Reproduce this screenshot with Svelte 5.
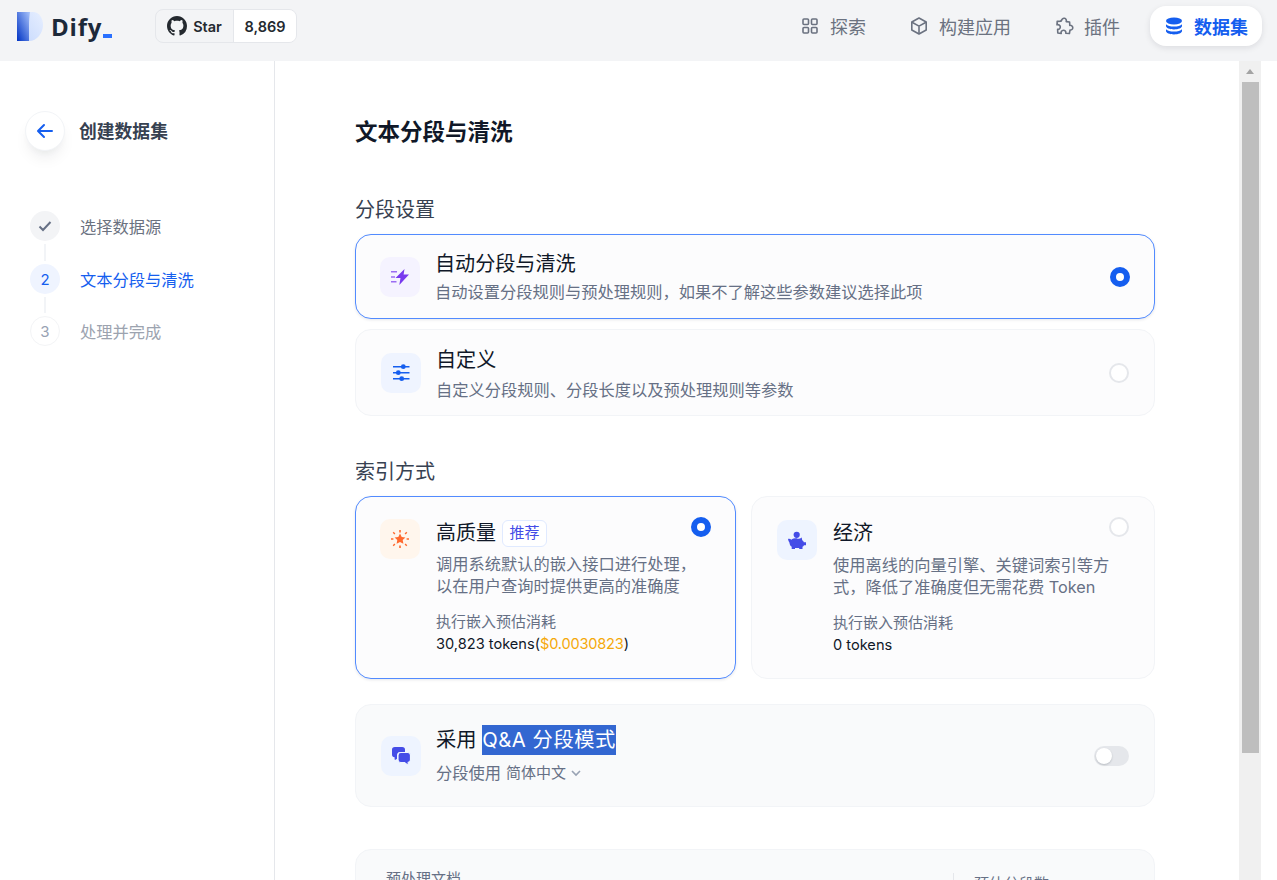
<script>
  const steps = [
    { n: "", label: "选择数据源", state: "done" },
    { n: "2", label: "文本分段与清洗", state: "active" },
    { n: "3", label: "处理并完成", state: "todo" }
  ];
</script>

<div class="page">
  <header class="topbar">
    <div class="brand">
      <svg class="logo" width="26" height="29" viewBox="0 0 26 29">
        <defs>
          <linearGradient id="stem" x1="0" y1="1" x2="1" y2="0">
            <stop offset="0" stop-color="#0033c4" />
            <stop offset="1" stop-color="#a9c4fb" />
          </linearGradient>
          <linearGradient id="bowl" x1="0" y1="1" x2="1" y2="0.2">
            <stop offset="0" stop-color="#c3d6fc" />
            <stop offset="1" stop-color="#e4edff" />
          </linearGradient>
        </defs>
        <path d="M0 0H16C22 0 26 6 26 13C26 21 20 29 12 29H0Z" fill="url(#bowl)" />
        <path d="M0 0H13C12.500 4 12 8 12 13V29H0Z" fill="url(#stem)" />
      </svg>
      <span class="wordmark">Dify</span><span class="dash"></span>
    </div>
    <div class="stars">
      <span class="stars-label">
        <svg width="20" height="20" viewBox="0 0 16 16" fill="#24292f"><path d="M8 0C3.58 0 0 3.58 0 8c0 3.54 2.29 6.53 5.47 7.59.4.07.55-.17.55-.38 0-.19-.01-.82-.01-1.49-2.01.37-2.53-.49-2.69-.94-.09-.23-.48-.94-.82-1.13-.28-.15-.68-.52-.01-.53.63-.01 1.08.58 1.23.82.72 1.21 1.87.87 2.33.66.07-.52.28-.87.51-1.07-1.78-.2-3.64-.89-3.64-3.95 0-.87.31-1.59.82-2.15-.08-.2-.36-1.02.08-2.12 0 0 .67-.21 2.2.82.64-.18 1.32-.27 2-.27.68 0 1.36.09 2 .27 1.53-1.04 2.2-.82 2.2-.82.44 1.1.16 1.92.08 2.12.51.56.82 1.27.82 2.15 0 3.07-1.87 3.75-3.65 3.95.29.25.54.73.54 1.48 0 1.07-.01 1.93-.01 2.2 0 .21.15.46.55.38A8.013 8.013 0 0016 8c0-4.42-3.58-8-8-8z" /></svg>
        Star
      </span>
      <span class="stars-count">8,869</span>
    </div>
    <nav class="nav">
      <span class="nav-item">
        <svg width="20" height="20" viewBox="0 0 20 20" fill="none" stroke="#6b7280" stroke-width="1.6"><rect x="3" y="3" width="5.5" height="5.5" rx="1" /><rect x="11.5" y="3" width="5.5" height="5.5" rx="1" /><rect x="3" y="11.5" width="5.5" height="5.5" rx="1" /><rect x="11.5" y="11.5" width="5.5" height="5.5" rx="1" /></svg>
        探索
      </span>
      <span class="nav-item">
        <svg width="20" height="20" viewBox="0 0 20 20" fill="none" stroke="#6b7280" stroke-width="1.6" stroke-linejoin="round"><path d="M10 2l7.2 4v8L10 18l-7.2-4V6L10 2Z" /><path d="M3 6.2l7 3.9 7-3.9M10 10.1V18" /></svg>
        构建应用
      </span>
      <span class="nav-item plugin">
        <svg width="20" height="20" viewBox="0 0 20 20" fill="none" stroke="#6b7280" stroke-width="1.6" stroke-linejoin="round"><path d="M7.600 4.600a2.400 2.400 0 1 1 4.600 1L15.600 6l.2 3.400a2.400 2.400 0 1 1 .2 4.700l-.6 3.400-3.600-.3a2.400 2.400 0 1 0-4.600.2l-3.400-.4-.2-3.600a2.400 2.400 0 1 0-.6-4.600l.2-3.400 4-.3-.2-.5Z" /></svg>
        插件
      </span>
      <span class="nav-item current">
        <svg width="20" height="20" viewBox="0 0 20 20" fill="#155eef"><ellipse cx="10" cy="5" rx="8" ry="3.400" /><path d="M2 8.200c1.300 1.500 4.400 2.300 8 2.300s6.700-.8 8-2.300V10c0 1.900-3.600 3.400-8 3.400S2 11.900 2 10V8.200Z" /><path d="M2 13.200c1.300 1.500 4.400 2.300 8 2.300s6.700-.8 8-2.300V15c0 1.900-3.600 3.400-8 3.400S2 16.900 2 15v-1.800Z" /></svg>
        数据集
      </span>
    </nav>
  </header>

  <div class="body">
    <aside class="sidebar">
      <div class="back-row">
        <span class="back">
          <svg width="20" height="20" viewBox="0 0 20 20" fill="none" stroke="#155eef" stroke-width="2" stroke-linecap="round" stroke-linejoin="round"><path d="M17 10H3.500M9 4l-6 6 6 6" /></svg>
        </span>
        <span class="back-title">创建数据集</span>
      </div>
      <ol class="steps">
        {#each steps as step, i}
          {#if i > 0}<li class="connector"></li>{/if}
          <li class="step {step.state}">
            <span class="step-dot">
              {#if step.state === "done"}
                <svg width="16" height="16" viewBox="0 0 16 16" fill="none" stroke="#667085" stroke-width="2"><path d="M2.500 8.500l3.500 3.500 7.500-8" /></svg>
              {:else}
                {step.n}
              {/if}
            </span>
            <span class="step-label">{step.label}</span>
          </li>
        {/each}
      </ol>
    </aside>

    <main class="main">
      <h1 class="title">文本分段与清洗</h1>

      <h2 class="section">分段设置</h2>
      <div class="option selected">
        <span class="tile tile-violet">
          <svg width="20" height="20" viewBox="0 0 20 20"><path d="M14.500 2 5.500 11h5l-1.200 7 9.700-10.500h-5.400l.9-5.500Z" fill="#7839ee" /><path d="M1 4h6v1.500H1zM1 9.300h4v1.500H1zM1 14h5.500v1.500H1z" fill="#9b6cf2" /></svg>
        </span>
        <div class="option-text">
          <div class="option-title">自动分段与清洗</div>
          <div class="option-desc">自动设置分段规则与预处理规则，如果不了解这些参数建议选择此项</div>
        </div>
        <span class="radio on"></span>
      </div>
      <div class="option second">
        <span class="tile tile-blue">
          <svg width="20" height="20" viewBox="0 0 20 20" fill="#155eef"><path d="M2 3.100h16.500v1.300H2zM2 9.100h16.500v1.300H2zM2 15.100h16.500v1.300H2z" /><circle cx="12.300" cy="3.700" r="2.400" /><circle cx="7.300" cy="9.700" r="2.400" /><circle cx="10.700" cy="15.700" r="2.400" /></svg>
        </span>
        <div class="option-text">
          <div class="option-title">自定义</div>
          <div class="option-desc">自定义分段规则、分段长度以及预处理规则等参数</div>
        </div>
        <span class="radio"></span>
      </div>

      <h2 class="section index-head">索引方式</h2>
      <div class="index-row">
        <div class="index-card hq selected">
          <span class="tile tile-orange">
            <svg width="20" height="20" viewBox="0 0 20 20" fill="#ff692e"><path d="M10 4.600l1.700 3.400 3.700.5-2.700 2.600.7 3.700L10 13l-3.400 1.800.7-3.700-2.700-2.600 3.700-.5L10 4.600Z" /><path d="M9.200 1h1.600v2.400H9.200zM9.200 16.600h1.600V19H9.200zM1 9.200h2.400v1.600H1zM16.600 9.200H19v1.600h-2.400zM3.700 2.700l1.700 1.700-1 1L2.700 3.700zM15.600 14.600l1.700 1.700-1 1-1.700-1.700z" /><path d="M16.300 2.700l1 1-1.700 1.700-1-1zM4.400 14.600l1 1-1.700 1.700-1-1z" /></svg>
          </span>
          <div class="index-text">
            <div class="index-title">高质量<span class="badge">推荐</span></div>
            <div class="index-desc">调用系统默认的嵌入接口进行处理，以在用户查询时提供更高的准确度</div>
            <div class="cost-label">执行嵌入预估消耗</div>
            <div class="cost">30,823 tokens(<span class="price">$0.0030823</span>)</div>
          </div>
          <span class="radio on corner"></span>
        </div>
        <div class="index-card eco">
          <span class="tile tile-indigo">
            <svg width="20" height="20" viewBox="0 0 20 20" fill="#444ce7"><circle cx="9.700" cy="4.800" r="3.100" /><path d="M1 9c1.200-.4 2.500 0 3.300.7C5.700 8.600 7 8.300 9.700 8.300c1.500.9 3.200.7 5-.8l.5 2.800c.9.500 1.400 1.100 1.600 1.900H19v3h-2c-.4.700-.9 1.200-1.500 1.600V19h-3.300v-1H8v1H4.700v-2.300C3.200 15.700 2.500 14.200 2.500 12.700 1.700 11.800 1.200 10.500 1 9Z" /></svg>
          </span>
          <div class="index-text">
            <div class="index-title">经济</div>
            <div class="index-desc">使用离线的向量引擎、关键词索引等方式，降低了准确度但无需花费 Token</div>
            <div class="cost-label">执行嵌入预估消耗</div>
            <div class="cost">0 tokens</div>
          </div>
          <span class="radio corner"></span>
        </div>
      </div>

      <div class="qa">
        <span class="tile tile-indigo">
          <svg width="20" height="20" viewBox="0 0 20 20" fill="#444ce7"><path d="M3.800 1h7.400A2.800 2.800 0 0 1 14 3.800V6H9.500A3.500 3.500 0 0 0 6 9.500v3.200l-1.300 1A.7.7 0 0 1 3.600 13v-1.800A2.700 2.700 0 0 1 1 8.500V3.800A2.800 2.800 0 0 1 3.800 1Z" /><path d="M9.800 6.500h6.900A2.800 2.800 0 0 1 19.500 9.300v4.400a2.800 2.800 0 0 1-2.300 2.700v1.800a.6.600 0 0 1-1 .5l-2.700-2.200H9.800A2.800 2.800 0 0 1 7 13.700V9.300a2.800 2.800 0 0 1 2.800-2.800Z" stroke="#eef4ff" stroke-width="1.200" /></svg>
        </span>
        <div class="qa-text">
          <div class="qa-title">采用 <span class="picked">Q&amp;A 分段模式</span></div>
          <div class="qa-lang">分段使用<span class="lang">简体中文</span>
            <svg width="12" height="12" viewBox="0 0 12 12" fill="none" stroke="#98a2b3" stroke-width="1.600"><path d="M2 4l4 4 4-4" /></svg>
          </div>
        </div>
        <span class="toggle"><span class="knob"></span></span>
      </div>

      <div class="preview">
        <div class="preview-left">预处理文档</div>
        <div class="preview-right">预估分段数</div>
      </div>
    </main>

    <div class="scrollbar">
      <span class="arrow"></span>
      <span class="thumb"></span>
    </div>
  </div>
</div>

<style>
  :global(body) {
    margin: 0;
    background: #fff;
    font-family: Inter, "Noto Sans CJK SC", sans-serif;
  }

  .page {
    height: 880px;
    display: flex;
    flex-direction: column;
    overflow: hidden;
  }

  .topbar {
    flex: none;
    height: 61px;
    display: flex;
    align-items: center;
    padding: 0 15px 0 17px;
    box-sizing: border-box;
    background: #f3f4f6;
  }

  .brand {
    display: flex;
    align-items: center;
    width: 138px;
    height: 29px;
    margin-top: -8px;
  }

  .wordmark {
    margin-left: 8px;
    font-family: "Open Sans", sans-serif;
    font-size: 24px;
    font-weight: 700;
    letter-spacing: 0.800px;
    line-height: 29px;
    color: #1d2939;
  }

  .dash {
    width: 9px;
    height: 4px;
    margin: 19px 0 0 1px;
    background: #2970ff;
  }

  .stars {
    display: flex;
    height: 34px;
    margin-top: -9px;
    box-sizing: border-box;
    border: 1px solid #e5e7eb;
    border-radius: 8px;
    overflow: hidden;
    font-size: 14.500px;
    font-weight: 600;
    color: #24292f;
  }

  .stars-label {
    width: 77px;
    display: flex;
    align-items: center;
    justify-content: center;
    gap: 6px;
    border-right: 1px solid #e5e7eb;
  }

  .stars-count {
    width: 62px;
    display: flex;
    align-items: center;
    justify-content: center;
    background: #fff;
  }

  .nav {
    margin-left: auto;
    display: flex;
    gap: 15px;
    margin-top: -9px;
  }

  .nav-item {
    height: 40px;
    padding: 0 14px;
    display: flex;
    align-items: center;
    gap: 10px;
    font-size: 18px;
    color: #6b7280;
    border-radius: 16px;
  }

  .nav-item.plugin {
    margin-right: 1px;
  }

  .nav-item.current {
    background: #fff;
    color: #155eef;
    font-weight: 700;
    box-shadow: 0 2px 6px rgba(16, 24, 40, 0.1);
  }

  .body {
    flex: 1;
    min-height: 0;
    display: flex;
  }

  .sidebar {
    flex: none;
    width: 275px;
    box-sizing: border-box;
    border-right: 1px solid #e5e7eb;
    padding: 50px 0 0 25px;
  }

  .back-row {
    display: flex;
    align-items: center;
    gap: 14px;
  }

  .back {
    width: 38px;
    height: 38px;
    display: flex;
    align-items: center;
    justify-content: center;
    border: 1px solid #f2f4f7;
    border-radius: 50%;
    background: #fff;
    box-shadow: 0 10px 16px -4px rgba(16, 24, 40, 0.08), 0 4px 6px -2px rgba(16, 24, 40, 0.03);
  }

  .back-title {
    margin-top: -2px;
    font-size: 17.800px;
    font-weight: 700;
    color: #374151;
  }

  .steps {
    list-style: none;
    margin: 60px 0 0 5px;
    padding: 0;
  }

  .step {
    display: flex;
    align-items: center;
    gap: 20px;
    height: 30px;
  }

  .connector {
    width: 2px;
    height: 16px;
    margin: 3px 0 3px 14px;
    background: #f2f4f7;
  }

  .connector:nth-child(2) {
    height: 17px;
  }

  .step-dot {
    width: 30px;
    height: 30px;
    box-sizing: border-box;
    display: flex;
    align-items: center;
    justify-content: center;
    border-radius: 50%;
    font-size: 15px;
  }

  .step-label {
    margin-top: 2px;
    font-size: 16.250px;
    line-height: 22px;
  }

  .done .step-dot {
    background: #f3f4f6;
  }

  .done .step-label {
    color: #6b7280;
  }

  .active .step-dot {
    background: #eff4ff;
    color: #155eef;
  }

  .active .step-label {
    color: #155eef;
  }

  .todo .step-dot {
    border: 1px solid #f3f4f6;
    color: #98a2b3;
  }

  .todo .step-label {
    color: #9ca3af;
  }

  .main {
    flex: 1;
    min-width: 0;
    padding: 56px 0 0 80px;
    overflow: hidden;
  }

  .title {
    margin: 0;
    width: 800px;
    font-size: 22.500px;
    font-weight: 700;
    line-height: 30px;
    color: #101828;
  }

  .section {
    margin: 48px 0 10px;
    padding-top: 1px;
    font-size: 20px;
    font-weight: 400;
    line-height: 28px;
    color: #374151;
  }

  .index-head {
    margin-top: 41px;
  }

  .option {
    width: 800px;
    box-sizing: border-box;
    display: flex;
    align-items: center;
    gap: 15px;
    padding: 15px 24px 14px 25px;
    border: 1px solid #f2f4f7;
    border-radius: 16px;
    background: #fcfcfd;
  }

  .option.selected {
    padding-left: 24px;
    border-color: #528bff;
    box-shadow: 0 1px 3px rgba(16, 24, 40, 0.1);
  }

  .option.second {
    margin-top: 10px;
    padding: 14px 25px 13px;
  }

  .second .option-text {
    margin-top: 2px;
  }

  .second .option-title {
    margin-bottom: 4px;
  }

  .tile {
    flex: none;
    width: 40px;
    height: 40px;
    display: flex;
    align-items: center;
    justify-content: center;
    border-radius: 10px;
  }

  .tile-violet {
    background: #f5f3ff;
  }

  .tile-blue {
    background: #eff4ff;
  }

  .tile-orange {
    background: #fff6ed;
  }

  .tile-indigo {
    background: #eef4ff;
  }

  .option-text {
    flex: 1;
  }

  .option-title {
    font-size: 20.100px;
    line-height: 28px;
    margin-bottom: 2px;
    color: #101828;
  }

  .option-desc {
    font-size: 16.250px;
    line-height: 24px;
    color: #667085;
  }

  .radio {
    flex: none;
    width: 20px;
    height: 20px;
    box-sizing: border-box;
    border: 2px solid #e5e7eb;
    border-radius: 50%;
    background: #fff;
  }

  .radio.on {
    border: 6px solid #155eef;
  }

  .index-row {
    display: flex;
    gap: 15px;
    width: 800px;
  }

  .index-card {
    position: relative;
    height: 183px;
    box-sizing: border-box;
    display: flex;
    align-items: flex-start;
    gap: 16px;
    border: 1px solid #f2f4f7;
    border-radius: 16px;
    background: #fcfcfd;
  }

  .index-card.hq {
    width: 381px;
    padding: 22px 30px 0 24px;
  }

  .index-card.eco {
    flex: 1;
    padding: 23px 44px 0 25px;
  }

  .index-card.selected {
    border-color: #528bff;
    box-shadow: 0 1px 3px rgba(16, 24, 40, 0.1);
  }

  .corner {
    position: absolute;
    top: 20px;
    right: 24px;
  }

  .eco .corner {
    right: 25px;
  }

  .index-text {
    flex: 1;
  }

  .index-card.eco .index-text {
    margin-top: -1px;
  }

  .index-title {
    display: flex;
    align-items: center;
    font-size: 20px;
    line-height: 28px;
    color: #101828;
  }

  .badge {
    margin-left: 6px;
    padding: 0 6.500px;
    height: 25px;
    display: flex;
    align-items: center;
    font-size: 15px;
    color: #444ce7;
    background: #fff;
    border: 1px solid #e0eaff;
    border-radius: 6px;
  }

  .index-desc {
    margin-top: 6px;
    font-size: 16.250px;
    line-height: 22px;
    color: #667085;
  }

  .eco .index-desc {
    margin-top: 7px;
  }

  .cost-label {
    margin-top: 14px;
    font-size: 15px;
    line-height: 22px;
    color: #667085;
  }

  .cost {
    font-size: 14.600px;
    line-height: 22px;
    color: #101828;
  }

  .price {
    letter-spacing: -0.200px;
    color: #f5a90a;
  }

  .qa {
    width: 800px;
    height: 103px;
    margin-top: 25px;
    box-sizing: border-box;
    display: flex;
    align-items: center;
    gap: 15px;
    padding: 0 25px;
    border: 1px solid #f2f4f7;
    border-radius: 16px;
    background: #f9fafb;
  }

  .qa-text {
    flex: 1;
    margin-top: 2px;
  }

  .qa-title {
    font-size: 20.250px;
    line-height: 30px;
    color: #101828;
  }

  .picked {
    display: inline-block;
    letter-spacing: 0.550px;
    background: #3367d1;
    color: #fff;
  }

  .qa-lang {
    margin-top: 3px;
    display: flex;
    align-items: center;
    font-size: 16.250px;
    line-height: 30px;
    color: #667085;
  }

  .lang {
    margin: 0 4px 0 5px;
    font-size: 15px;
  }

  .toggle {
    width: 35px;
    height: 20px;
    box-sizing: border-box;
    padding: 2px;
    border-radius: 10px;
    background: #e5e7eb;
  }

  .knob {
    display: block;
    width: 16px;
    height: 16px;
    border-radius: 50%;
    background: #fff;
    box-shadow: 0 1px 2px rgba(16, 24, 40, 0.2);
  }

  .preview {
    width: 800px;
    height: 80px;
    margin-top: 42px;
    box-sizing: border-box;
    display: flex;
    padding: 17px 30px 0;
    border: 1px solid #f2f4f7;
    border-radius: 16px;
    background: #f9fafb;
    font-size: 15px;
    color: #667085;
  }

  .preview-left {
    width: 567px;
    height: 60px;
    margin-top: 6px;
    line-height: 12px;
    border-right: 1px solid #e5e7eb;
  }

  .preview-right {
    margin: 7px 0 0 20px;
    line-height: 20px;
  }

  .scrollbar {
    flex: none;
    width: 22px;
    margin-right: 16px;
    background: #f0f0f0;
    display: flex;
    flex-direction: column;
    align-items: center;
  }

  .arrow {
    margin-top: 8px;
    width: 0;
    height: 0;
    border: 4.500px solid transparent;
    border-top: 0;
    border-bottom: 5px solid #a3a3a3;
  }

  .thumb {
    margin-top: 8px;
    width: 17px;
    height: 671px;
    background: #bebebe;
  }
</style>
